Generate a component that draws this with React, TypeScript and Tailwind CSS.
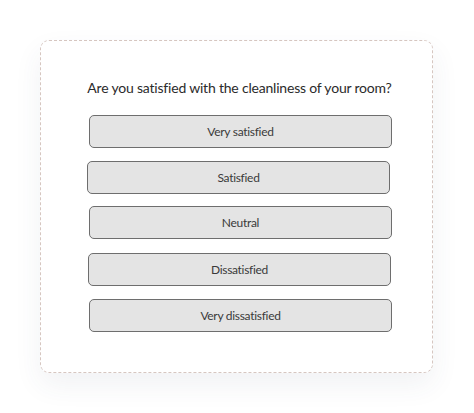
import React from "react";

const options: { label: string; ml: string; mt: string }[] = [
  { label: "Very satisfied", ml: "ml-[48px]", mt: "mt-0" },
  { label: "Satisfied", ml: "ml-[46px]", mt: "mt-[13px]" },
  { label: "Neutral", ml: "ml-[48px]", mt: "mt-[12px]" },
  { label: "Dissatisfied", ml: "ml-[47px]", mt: "mt-[14px]" },
  { label: "Very dissatisfied", ml: "ml-[48px]", mt: "mt-[13px]" },
];

export default function App() {
  return (
    <div
      className="w-[474px] h-[413px] bg-white pt-[40px] pl-[40px]"
      style={{ fontFamily: "Lato, 'Open Sans', sans-serif" }}
    >
      <div className="w-[393px] h-[333px] rounded-[9px] border border-dashed border-[#d6c6c0] bg-white shadow-[0_12px_28px_rgba(60,70,100,0.07)] pt-[36px]">
        <div className="text-center text-[14px] tracking-[-0.2px] leading-[22px] text-[#2b2b2b] pl-[6px]">
          Are you satisfied with the cleanliness of your room?
        </div>
        <div className="flex flex-col mt-[16px]">
          {options.map((o) => (
            <div
              key={o.label}
              className={`${o.ml} ${o.mt} w-[303px] h-[33px] flex items-center justify-center rounded-[5px] border-[1.5px] border-[#6e6e6e] bg-[#e4e4e4] text-[12px] tracking-[-0.3px] text-[#3a3a3a]`}
            >
              {o.label}
            </div>
          ))}
        </div>
      </div>
    </div>
  );
}
